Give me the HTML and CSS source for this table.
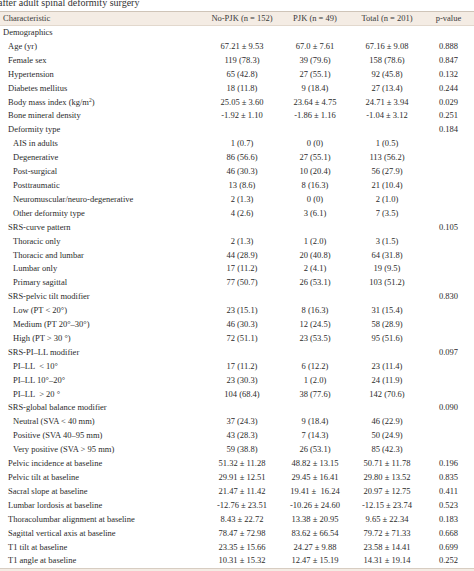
FILE: index.html
```html
<!DOCTYPE html>
<html>
<head>
<meta charset="utf-8">
<link rel="stylesheet" href="styles.css">
</head>
<body>
<div class="caption">after adult spinal deformity surgery</div>
<table class="tbl">
<colgroup>
<col class="c1"><col class="c2"><col class="c3"><col class="c4"><col class="c5">
</colgroup>
<thead>
<tr><th class="l1">Characteristic</th><th>No-PJK (n = 152)</th><th>PJK (n = 49)</th><th>Total (n = 201)</th><th>p-value</th></tr>
</thead>
<tbody>
<tr><td class="l1">Demographics</td><td></td><td></td><td></td><td></td></tr>
<tr><td class="l2">Age (yr)</td><td>67.21 ± 9.53</td><td>67.0 ± 7.61</td><td>67.16 ± 9.08</td><td>0.888</td></tr>
<tr><td class="l2">Female sex</td><td>119 (78.3)</td><td>39 (79.6)</td><td>158 (78.6)</td><td>0.847</td></tr>
<tr><td class="l2">Hypertension</td><td>65 (42.8)</td><td>27 (55.1)</td><td>92 (45.8)</td><td>0.132</td></tr>
<tr><td class="l2">Diabetes mellitus</td><td>18 (11.8)</td><td>9 (18.4)</td><td>27 (13.4)</td><td>0.244</td></tr>
<tr><td class="l2">Body mass index (kg/m<sup>2</sup>)</td><td>25.05 ± 3.60</td><td>23.64 ± 4.75</td><td>24.71 ± 3.94</td><td>0.029</td></tr>
<tr><td class="l2">Bone mineral density</td><td>-1.92 ± 1.10</td><td>-1.86 ± 1.16</td><td>-1.04 ± 3.12</td><td>0.251</td></tr>
<tr><td class="l2">Deformity type</td><td></td><td></td><td></td><td>0.184</td></tr>
<tr><td class="l3">AIS in adults</td><td>1 (0.7)</td><td>0 (0)</td><td>1 (0.5)</td><td></td></tr>
<tr><td class="l3">Degenerative</td><td>86 (56.6)</td><td>27 (55.1)</td><td>113 (56.2)</td><td></td></tr>
<tr><td class="l3">Post-surgical</td><td>46 (30.3)</td><td>10 (20.4)</td><td>56 (27.9)</td><td></td></tr>
<tr><td class="l3">Posttraumatic</td><td>13 (8.6)</td><td>8 (16.3)</td><td>21 (10.4)</td><td></td></tr>
<tr><td class="l3">Neuromuscular/neuro-degenerative</td><td>2 (1.3)</td><td>0 (0)</td><td>2 (1.0)</td><td></td></tr>
<tr><td class="l3">Other deformity type</td><td>4 (2.6)</td><td>3 (6.1)</td><td>7 (3.5)</td><td></td></tr>
<tr><td class="l2">SRS-curve pattern</td><td></td><td></td><td></td><td>0.105</td></tr>
<tr><td class="l3">Thoracic only</td><td>2 (1.3)</td><td>1 (2.0)</td><td>3 (1.5)</td><td></td></tr>
<tr><td class="l3">Thoracic and lumbar</td><td>44 (28.9)</td><td>20 (40.8)</td><td>64 (31.8)</td><td></td></tr>
<tr><td class="l3">Lumbar only</td><td>17 (11.2)</td><td>2 (4.1)</td><td>19 (9.5)</td><td></td></tr>
<tr><td class="l3">Primary sagittal</td><td>77 (50.7)</td><td>26 (53.1)</td><td>103 (51.2)</td><td></td></tr>
<tr><td class="l2">SRS-pelvic tilt modifier</td><td></td><td></td><td></td><td>0.830</td></tr>
<tr><td class="l3">Low (PT &lt; 20°)</td><td>23 (15.1)</td><td>8 (16.3)</td><td>31 (15.4)</td><td></td></tr>
<tr><td class="l3">Medium (PT 20°–30°)</td><td>46 (30.3)</td><td>12 (24.5)</td><td>58 (28.9)</td><td></td></tr>
<tr><td class="l3">High (PT &gt; 30 °)</td><td>72 (51.1)</td><td>23 (53.5)</td><td>95 (51.6)</td><td></td></tr>
<tr><td class="l2">SRS-PI–LL modifier</td><td></td><td></td><td></td><td>0.097</td></tr>
<tr><td class="l3">PI–LL &nbsp;&lt; 10°</td><td>17 (11.2)</td><td>6 (12.2)</td><td>23 (11.4)</td><td></td></tr>
<tr><td class="l3">PI–LL 10°–20°</td><td>23 (30.3)</td><td>1 (2.0)</td><td>24 (11.9)</td><td></td></tr>
<tr><td class="l3">PI–LL &nbsp;&gt; 20 °</td><td>104 (68.4)</td><td>38 (77.6)</td><td>142 (70.6)</td><td></td></tr>
<tr><td class="l2">SRS-global balance modifier</td><td></td><td></td><td></td><td>0.090</td></tr>
<tr><td class="l3">Neutral (SVA &lt; 40 mm)</td><td>37 (24.3)</td><td>9 (18.4)</td><td>46 (22.9)</td><td></td></tr>
<tr><td class="l3">Positive (SVA 40–95 mm)</td><td>43 (28.3)</td><td>7 (14.3)</td><td>50 (24.9)</td><td></td></tr>
<tr><td class="l3">Very positive (SVA &gt; 95 mm)</td><td>59 (38.8)</td><td>26 (53.1)</td><td>85 (42.3)</td><td></td></tr>
<tr><td class="l2">Pelvic incidence at baseline</td><td>51.32 ± 11.28</td><td>48.82 ± 13.15</td><td>50.71 ± 11.78</td><td>0.196</td></tr>
<tr><td class="l2">Pelvic tilt at baseline</td><td>29.91 ± 12.51</td><td>29.45 ± 16.41</td><td>29.80 ± 13.52</td><td>0.835</td></tr>
<tr><td class="l2">Sacral slope at baseline</td><td>21.47 ± 11.42</td><td>19.41 ± &nbsp;16.24</td><td>20.97 ± 12.75</td><td>0.411</td></tr>
<tr><td class="l2">Lumbar lordosis at baseline</td><td>-12.76 ± 23.51</td><td>-10.26 ± 24.60</td><td>-12.15 ± 23.74</td><td>0.523</td></tr>
<tr><td class="l2">Thoracolumbar alignment at baseline</td><td>8.43 ± 22.72</td><td>13.38 ± 20.95</td><td>9.65 ± 22.34</td><td>0.183</td></tr>
<tr><td class="l2">Sagittal vertical axis at baseline</td><td>78.47 ± 72.98</td><td>83.62 ± 66.54</td><td>79.72 ± 71.33</td><td>0.668</td></tr>
<tr><td class="l2">T1 tilt at baseline</td><td>23.35 ± 15.66</td><td>24.27 ± 9.88</td><td>23.58 ± 14.41</td><td>0.699</td></tr>
<tr><td class="l2">T1 angle at baseline</td><td>10.31 ± 15.32</td><td>12.47 ± 15.19</td><td>14.31 ± 19.14</td><td>0.252</td></tr>
</tbody>
</table>
<div class="footband"></div>
</body>
</html>
```

FILE: styles.css
```css
html, body {
  margin: 0;
  padding: 0;
  background: #ffffff;
}
body {
  width: 474px;
  height: 571px;
  overflow: hidden;
  font-family: "Liberation Serif", "Times New Roman", serif;
  color: #2b2b2b;
}
.caption {
  font-size: 10px;
  line-height: 12px;
  height: 12px;
  margin-top: -3px;
  margin-left: -2px;
  white-space: nowrap;
  color: #333333;
}
.tbl {
  margin-top: 2px;
  width: 474px;
  border-collapse: collapse;
  table-layout: fixed;
  font-size: 8.5px;
}
.c1 { width: 205px; }
.c2 { width: 74px; }
.c3 { width: 72px; }
.c4 { width: 72px; }
.c5 { width: 51px; }
.tbl th {
  font-weight: normal;
  background: #f4ece4;
  height: 13px;
  line-height: 13px;
  padding: 0;
  text-align: center;
  white-space: nowrap;
  color: #3a3a3a;
  border-top: 1px solid #cfc4b8;
  border-bottom: 1px solid #e2d8cd;
}
.tbl td {
  height: 13.9px;
  line-height: 13.9px;
  padding: 0;
  text-align: center;
  white-space: nowrap;
}
.tbl th.l1, .tbl td.l1 { text-align: left; padding-left: 3px; }
.tbl td.l2 { text-align: left; padding-left: 8px; }
.tbl td.l3 { text-align: left; padding-left: 13px; }
.tbl tbody tr:last-child td { border-bottom: 1px solid #d7cdc2; }
sup {
  font-size: 5.5px;
  line-height: 0;
  vertical-align: 3px;
}
.footband {
  height: 10px;
  background: #f4ece4;
}
```
